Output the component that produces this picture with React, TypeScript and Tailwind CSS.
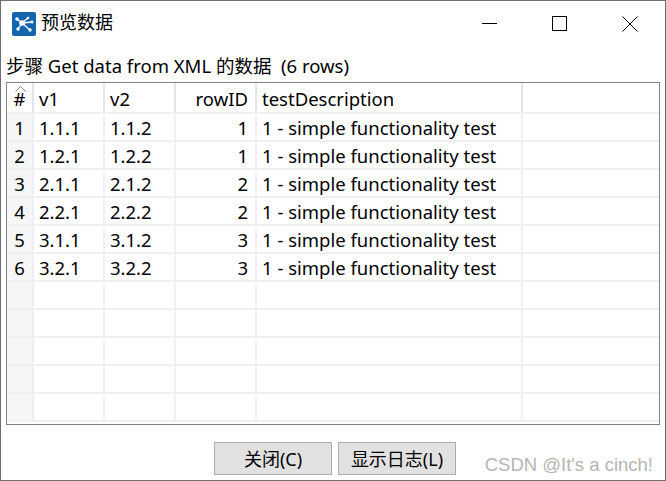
const columns = [
  { name: 'v1', width: 'w-[71px]', align: 'pl-[5px] text-left' },
  { name: 'v2', width: 'w-[71px]', align: 'pl-[5px] text-left' },
  { name: 'rowID', width: 'w-[81px]', align: 'pr-[7px] text-right' },
  { name: 'testDescription', width: 'w-[266px]', align: 'pl-[5px] text-left' },
]

const rows = [
  ['1.1.1', '1.1.2', '1', '1 - simple functionality test'],
  ['1.2.1', '1.2.2', '1', '1 - simple functionality test'],
  ['2.1.1', '2.1.2', '2', '1 - simple functionality test'],
  ['2.2.1', '2.2.2', '2', '1 - simple functionality test'],
  ['3.1.1', '3.1.2', '3', '1 - simple functionality test'],
  ['3.2.1', '3.2.2', '3', '1 - simple functionality test'],
  ['', '', '', ''],
  ['', '', '', ''],
  ['', '', '', ''],
  ['', '', '', ''],
  ['', '', '', ''],
]

function AppIcon() {
  return (
    <svg width="24" height="24" viewBox="0 0 24 24" className="shrink-0">
      <rect width="24" height="24" rx="2" fill="#1366ad" />
      <path d="M10 11 5 7M10 11l6-5M10 11l10-1M10 11l8 7M10 11l-4 6" stroke="#fff" strokeWidth="1.3" />
      <g fill="#fff">
        <circle cx="10" cy="11" r="2.8" />
        <circle cx="5" cy="7" r="1.8" />
        <circle cx="16" cy="6" r="1.3" />
        <circle cx="20" cy="10" r="1.5" />
        <circle cx="18" cy="18" r="1.7" />
        <circle cx="6" cy="17" r="1.7" />
      </g>
    </svg>
  )
}

function TitleBar() {
  return (
    <div className="flex h-[45px] items-center pl-[11px]">
      <AppIcon />
      <span className="mb-[3px] ml-[5px] text-[18px] leading-none">预览数据</span>
      <div className="ml-auto flex items-center">
        <svg width="16" height="16" viewBox="0 0 16 16" className="mr-[54px]">
          <path d="M0 7.5h15" stroke="#000" />
        </svg>
        <svg width="16" height="16" viewBox="0 0 16 16" className="mr-[54px]">
          <rect x="0.5" y="0.5" width="14" height="14" fill="none" stroke="#000" />
        </svg>
        <svg width="16" height="16" viewBox="0 0 16 16" className="mr-[27px]">
          <path d="M0.5 0.5 15.5 15.5M15.5 0.5 0.5 15.5" stroke="#000" />
        </svg>
      </div>
    </div>
  )
}

function DataTable() {
  return (
    <div className="mx-[5px] h-[343px] overflow-hidden border border-[#7f8388] bg-white">
      <div className="flex h-[31px] border-b-2 border-[#eef0f4]">
        <div className="relative w-[27px] shrink-0 border-r-2 border-[#e3e4e8] pt-[2px] text-center">
          #
          <svg width="11" height="6" viewBox="0 0 11 6" className="absolute left-[8px] top-[3px]">
            <path d="M0.5 5.5 5.5 0.5 10.5 5.5" fill="none" stroke="#8a8a8a" />
          </svg>
        </div>
        {columns.map((col) => (
          <div
            key={col.name}
            className={`${col.width} shrink-0 border-r-2 border-[#e3e4e8] pt-[2px] ${col.align}`}
          >
            {col.name}
          </div>
        ))}
      </div>
      {rows.map((row, i) => (
        <div key={i} className="flex h-[28px] border-b-2 border-[#f0f0f2]">
          <div className="w-[27px] shrink-0 border-r-2 border-[#eceff7] bg-[#f6f6f6] text-center leading-[27px]">
            {row[0] ? i + 1 : ''}
          </div>
          {columns.map((col, j) => (
            <div
              key={col.name}
              className={`${col.width} shrink-0 border-r-2 border-[#eef1f8] leading-[27px] ${col.align}`}
            >
              {row[j]}
            </div>
          ))}
        </div>
      ))}
    </div>
  )
}

function DialogButton({ label }: { label: string }) {
  return (
    <button
      type="button"
      className="h-[33px] w-[118px] border border-[#adadad] bg-[#e1e1e1] text-[18px] leading-none"
    >
      {label}
    </button>
  )
}

export default function App() {
  return (
    <div
      className="relative h-[481px] w-[666px] overflow-hidden border border-[#6f6f6f] bg-white text-[18.5px] text-black"
      style={{ fontFamily: '"Noto Sans", "Noto Sans CJK SC", sans-serif' }}
    >
      <TitleBar />
      <div className="h-[36px] pl-[5px] pt-[7px] leading-[26px]">步骤 Get data from XML 的数据&nbsp; (6 rows)</div>
      <DataTable />
      <div className="mt-[17px] flex gap-[6px] pl-[213px]">
        <DialogButton label="关闭(C)" />
        <DialogButton label="显示日志(L)" />
      </div>
      <span className="absolute right-[12px] bottom-[4px] font-['Liberation_Sans'] text-[18.5px] leading-[22px] text-[#b5b5b5]">
        CSDN @It's a cinch!
      </span>
    </div>
  )
}
